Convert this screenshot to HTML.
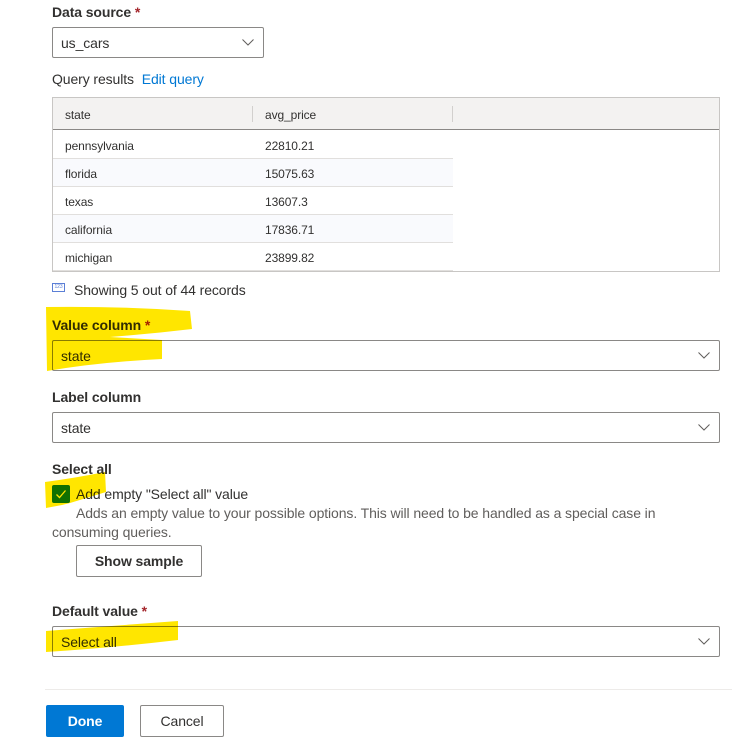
<!DOCTYPE html>
<html><head><meta charset="utf-8"><style>
*{box-sizing:border-box;margin:0;padding:0}
body{width:732px;height:743px;background:#fff;font-family:"Segoe UI","Liberation Sans",sans-serif;color:#323130;position:relative;overflow:hidden;font-size:14px;letter-spacing:-0.1px}
.a{position:absolute;white-space:nowrap}
.lbl{font-weight:600;font-size:14px;color:#323130}
.req{color:#a4262c}
.dd{position:absolute;border:1px solid #8a8886;border-radius:2px;background:#fff}
.dd span{position:absolute;left:8px;top:7px;font-size:14px}
.dd svg{position:absolute;right:9px;top:11px}
.cell{position:absolute;font-size:12px;color:#323130}
</style></head><body>
<div class="a lbl" style="left:52px;top:4px">Data source <span class="req">*</span></div>
<div class="dd" style="left:52px;top:27px;width:212px;height:31px"><span>us_cars</span><svg width="12" height="7" viewBox="0 0 12 7"><path d="M0.5 0.5 L6 6 L11.5 0.5" fill="none" stroke="#605e5c" stroke-width="1"/></svg></div>
<div class="a" style="left:52px;top:71px">Query results <span style="color:#0078d4;margin-left:4px">Edit query</span></div>

<div class="a" style="left:52px;top:97px;width:668px;height:175px;border:1px solid #c8c6c4"></div>
<div class="a" style="left:53px;top:98px;width:666px;height:32px;background:#f3f2f1;border-bottom:1px solid #8a8886"></div>
<div class="a" style="left:252px;top:106px;width:1px;height:16px;background:#d2d0ce"></div>
<div class="a" style="left:452px;top:106px;width:1px;height:16px;background:#d2d0ce"></div>
<div class="cell" style="left:65px;top:108px">state</div>
<div class="cell" style="left:265px;top:108px">avg_price</div>

<div class="a" style="left:53px;top:131px;width:400px;height:28px;border-bottom:1px solid #e1dfdd"></div>
<div class="a" style="left:53px;top:159px;width:400px;height:28px;background:#f9fafd;border-bottom:1px solid #e1dfdd"></div>
<div class="a" style="left:53px;top:187px;width:400px;height:28px;border-bottom:1px solid #e1dfdd"></div>
<div class="a" style="left:53px;top:215px;width:400px;height:28px;background:#f9fafd;border-bottom:1px solid #e1dfdd"></div>
<div class="a" style="left:53px;top:243px;width:400px;height:28px;border-bottom:1px solid #e1dfdd"></div>
<div class="cell" style="left:65px;top:139px">pennsylvania</div><div class="cell" style="left:265px;top:139px">22810.21</div>
<div class="cell" style="left:65px;top:167px">florida</div><div class="cell" style="left:265px;top:167px">15075.63</div>
<div class="cell" style="left:65px;top:195px">texas</div><div class="cell" style="left:265px;top:195px">13607.3</div>
<div class="cell" style="left:65px;top:223px">california</div><div class="cell" style="left:265px;top:223px">17836.71</div>
<div class="cell" style="left:65px;top:251px">michigan</div><div class="cell" style="left:265px;top:251px">23899.82</div>

<div class="a" style="left:52px;top:283px;width:13px;height:9px;border:1px solid #5b7fd6;font-size:5px;line-height:7px;color:#5b7fd6;text-align:center">123</div>
<div class="a" style="left:74px;top:282px">Showing 5 out of 44 records</div>

<div class="a lbl" style="left:52px;top:317px">Value column <span class="req">*</span></div>
<div class="dd" style="left:52px;top:340px;width:668px;height:31px"><span>state</span><svg width="12" height="7" viewBox="0 0 12 7"><path d="M0.5 0.5 L6 6 L11.5 0.5" fill="none" stroke="#605e5c"/></svg></div>

<div class="a lbl" style="left:52px;top:389px">Label column</div>
<div class="dd" style="left:52px;top:412px;width:668px;height:31px"><span>state</span><svg width="12" height="7" viewBox="0 0 12 7"><path d="M0.5 0.5 L6 6 L11.5 0.5" fill="none" stroke="#605e5c"/></svg></div>

<div class="a lbl" style="left:52px;top:461px">Select all</div>
<div class="a" style="left:52px;top:485px;width:18px;height:18px;background:#107c10;border-radius:2px"><svg width="18" height="18" viewBox="0 0 18 18" style="position:absolute;left:0;top:0"><path d="M4.5 9.5 L7.5 12.5 L13.5 5.5" fill="none" stroke="#fff" stroke-width="1.3"/></svg></div>
<div class="a" style="left:76px;top:486px">Add empty "Select all" value</div>
<div class="a" style="left:76px;top:505px;color:#605e5c">Adds an empty value to your possible options. This will need to be handled as a special case in</div>
<div class="a" style="left:52px;top:524px;color:#605e5c">consuming queries.</div>
<div class="a" style="left:76px;top:545px;width:126px;height:32px;border:1px solid #8a8886;border-radius:2px;font-weight:600;text-align:center;line-height:31px">Show sample</div>

<div class="a lbl" style="left:52px;top:603px">Default value <span class="req">*</span></div>
<div class="dd" style="left:52px;top:626px;width:668px;height:31px"><span>Select all</span><svg width="12" height="7" viewBox="0 0 12 7"><path d="M0.5 0.5 L6 6 L11.5 0.5" fill="none" stroke="#605e5c"/></svg></div>

<div class="a" style="left:45px;top:689px;width:687px;height:1px;background:#edebe9"></div>
<div class="a" style="left:46px;top:705px;width:78px;height:32px;background:#0078d4;border-radius:2px;color:#fff;font-weight:600;text-align:center;line-height:32px">Done</div>
<div class="a" style="left:140px;top:705px;width:84px;height:32px;border:1px solid #8a8886;border-radius:2px;text-align:center;line-height:30px">Cancel</div>

<svg class="a" style="left:0;top:0;mix-blend-mode:multiply" width="732" height="743">
<g fill="#ffe600">
<path d="M46 307 Q120 306 190 311 L192 329 Q150 334 110 337 L162 340 L162 359 Q100 362 47 371 Z"/>
<path d="M45 482 Q75 478 105 472 L106 492 L70 503 L62 505 L46 508 Z"/>
<path d="M46 631 Q110 626 178 621 L178 640 Q110 648 46 652 Z"/>
</g></svg>
</body></html>
